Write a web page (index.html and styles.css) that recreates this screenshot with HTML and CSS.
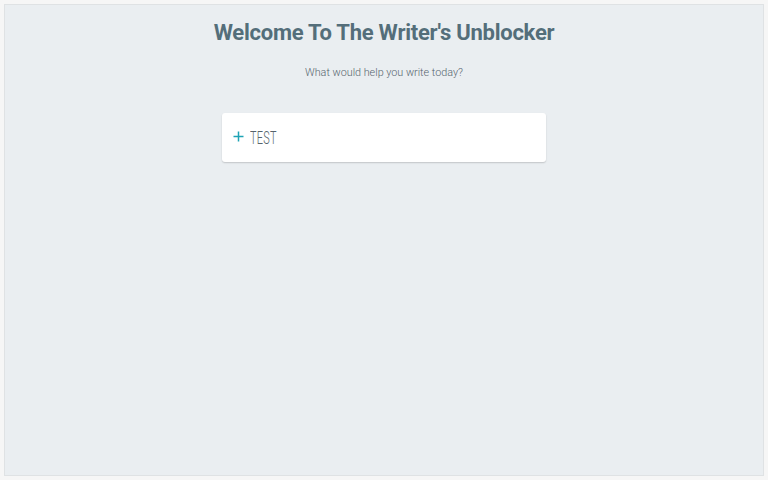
FILE: index.html
```html
<!DOCTYPE html>
<html lang="en">
<head>
<meta charset="utf-8">
<title>The Writer's Unblocker</title>
<link rel="stylesheet" href="styles.css">
</head>
<body>
<main class="frame">
  <h1 class="title">Welcome To The Writer's Unblocker</h1>
  <p class="subtitle">What would help you write today?</p>
  <ul class="list">
    <li class="card">
      <svg class="plus" width="11" height="11" viewBox="0 0 11 11"><path d="M5.5 0.5v10M0.5 5.5h10" stroke="#1ea3b5" stroke-width="1.5" fill="none"/></svg>
      <span class="label">TEST</span>
    </li>
  </ul>
</main>
</body>
</html>
```
FILE: styles.css
```css
html, body {
  margin: 0;
  padding: 0;
  height: 100%;
}
body {
  background: #f6f6f6;
  padding: 4px;
  box-sizing: border-box;
  font-family: Roboto, "Liberation Sans", sans-serif;
}
.frame {
  height: 100%;
  box-sizing: border-box;
  border: 1px solid #dfe2e4;
  background: #eaeef1;
  display: flex;
  flex-direction: column;
  align-items: center;
}
.title {
  margin: 15px 0 0;
  font-size: 22px;
  font-weight: 700;
  color: #546e7a;
  line-height: 26px;
  letter-spacing: -0.25px;
}
.subtitle {
  margin: 20px 0 0;
  font-size: 10.8px;
  font-weight: 300;
  color: #56656e;
  line-height: 14px;
}
.list {
  list-style: none;
  margin: 33px 0 0;
  padding: 0;
}
.card {
  width: 324px;
  height: 49px;
  box-sizing: border-box;
  background: #fff;
  border-radius: 3px;
  box-shadow: 0 1px 2px rgba(0, 0, 0, 0.12), 0 1px 1px rgba(0, 0, 0, 0.06);
  display: flex;
  align-items: center;
  padding-left: 11px;
  gap: 6px;
}
.plus {
  display: block;
  margin-top: -2px;
}
.label {
  display: inline-block;
  font-family: Roboto, "Liberation Sans", sans-serif;
  font-weight: 300;
  font-size: 17.6px;
  color: #56636b;
  transform: scaleX(0.62);
  transform-origin: left center;
  letter-spacing: 0.4px;
}
```
